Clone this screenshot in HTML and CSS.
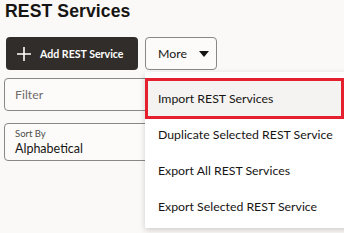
FILE: index.html
```html
<!DOCTYPE html>
<html lang="en">
<head>
    <meta charset="UTF-8">
    <title>REST Services</title>
    <link rel="stylesheet" href="styles.css">
</head>
<body>

    <h1 class="title">REST Services</h1>

    <div class="toolbar">
        <button class="btn btn-primary">
            <svg class="plus" width="16" height="16" viewBox="0 0 16 16">
                <path d="M8 1v14M1 8h14" stroke="#fff" stroke-width="1.6" fill="none"/>
            </svg>
            Add REST Service
        </button>
        <div class="more-wrap">
            <button class="btn btn-outline">
                More
                <svg class="caret" width="10" height="6" viewBox="0 0 10 6">
                    <path d="M0 0h10L5 6z" fill="#161513"/>
                </svg>
            </button>

            <ul class="menu">
                <li class="menu-item selected">Import REST Services</li>
                <li class="menu-item">Duplicate Selected REST Service</li>
                <li class="menu-item">Export All REST Services</li>
                <li class="menu-item">Export Selected REST Service</li>
            </ul>
        </div>
    </div>

    <div class="fields">
        <div class="field">
            <span class="placeholder">Filter</span>
        </div>
        <div class="field field-select">
            <span class="label">Sort By</span>
            <span class="value">Alphabetical</span>
        </div>
    </div>

</body>
</html>
```

FILE: styles.css
```css
body {
    margin: 0;
    background-color: #faf9f7;
    font-family: Lato, "Noto Sans", Arial, sans-serif;
    color: #161513;
    width: 344px;
    height: 233px;
    overflow: hidden;
}
.title {
    margin: 0;
    padding: 0 0 0 5px;
    font-family: "Liberation Sans", Arial, sans-serif;
    font-size: 17.6px;
    font-weight: bold;
    line-height: 22px;
    letter-spacing: 0.1px;
}
.toolbar {
    display: flex;
    gap: 7px;
    margin: 15px 0 0 6px;
}
.btn {
    height: 33px;
    border-radius: 4px;
    font-family: inherit;
    display: flex;
    align-items: center;
    box-sizing: border-box;
    cursor: pointer;
}
.btn-primary {
    width: 132px;
    background-color: #312d2a;
    color: #fff;
    border: none;
    font-size: 10.6px;
    font-weight: bold;
    padding: 0 0 0 10px;
    gap: 8px;
}
.btn-outline {
    width: 72px;
    background-color: #fcfbfa;
    color: #161513;
    border: 1px solid #8a8784;
    font-size: 12.3px;
    padding: 0 0 0 12px;
    gap: 12px;
}
.more-wrap {
    position: relative;
}
.menu {
    position: absolute;
    left: 0;
    top: 35px;
    width: 204px;
    margin: 0;
    padding: 6px 0 3px 0;
    list-style: none;
    background-color: #fff;
    box-shadow: 0 2px 6px rgba(0, 0, 0, 0.18);
    z-index: 2;
}
.menu-item {
    height: 36px;
    line-height: 36px;
    padding-left: 13px;
    font-size: 12.3px;
    white-space: nowrap;
    box-sizing: border-box;
}
.menu-item.selected {
    height: 41px;
    line-height: 35px;
    margin-bottom: -2px;
    background-color: #f4f3f1;
    border: 3px solid #e5202e;
    padding-left: 10px;
    width: 199px;
}
.fields {
    margin: 8px 0 0 4px;
    display: flex;
    flex-direction: column;
    gap: 12px;
}
.field {
    width: 170px;
    height: 33px;
    border: 1px solid #8a8784;
    border-radius: 4px;
    background-color: #fcfbfa;
    box-sizing: border-box;
    padding: 0 10px;
    display: flex;
    flex-direction: column;
    justify-content: center;
}
.field-select {
    height: 38px;
}
.placeholder {
    color: #6f6c69;
    font-size: 12.3px;
}
.label {
    font-size: 9.5px;
    color: #4f4c49;
    line-height: 12px;
}
.value {
    font-size: 12.5px;
    line-height: 17px;
}
```
